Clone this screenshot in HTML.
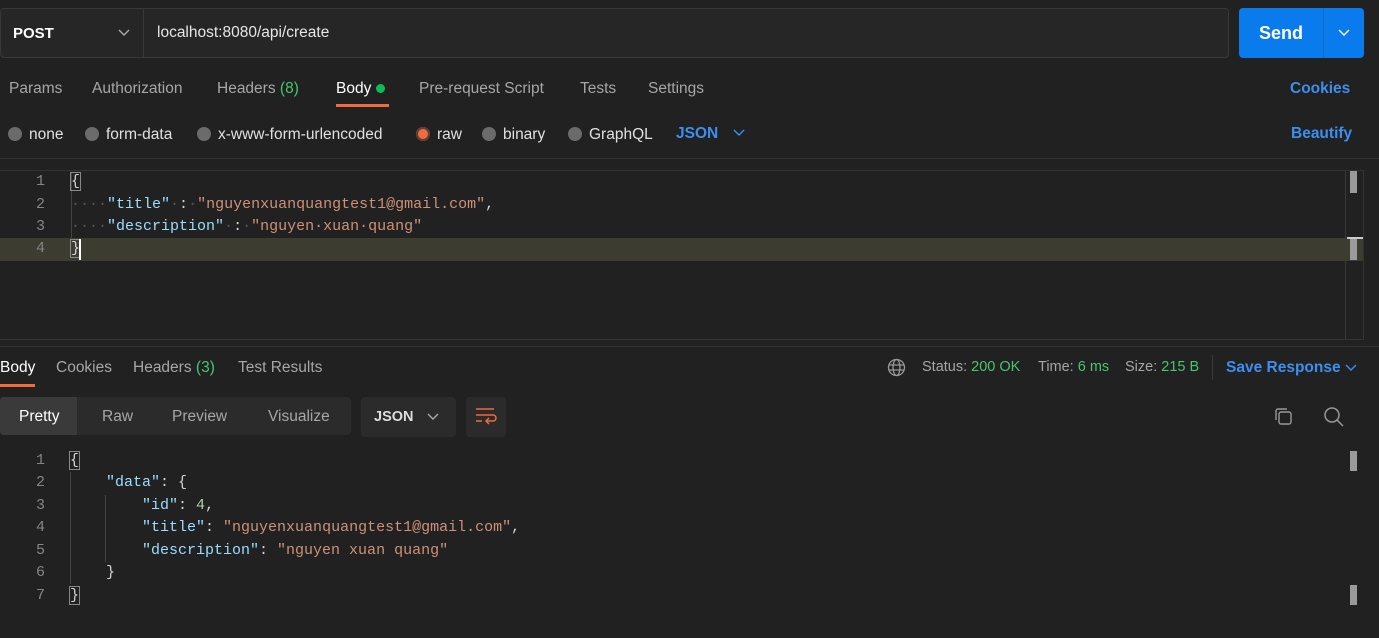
<!DOCTYPE html>
<html><head><style>
*{margin:0;padding:0;box-sizing:border-box}
body{width:1379px;height:638px;background:#212121;font-family:"Liberation Sans",sans-serif;color:#ccc;position:relative;overflow:hidden;font-size:15.5px}
.a{position:absolute;white-space:pre}
.mono{font-family:"Liberation Mono",monospace;font-size:15px}
.k{color:#9cdcfe}.s{color:#ce9178}.p{color:#d4d4d4}.n{color:#b5cea8}.d{color:#555}
.ln{color:#858585;width:45px;text-align:right}
.dot{display:inline-block;width:14px;height:14px;border-radius:50%;background:#6b6b6b;vertical-align:-2px;margin-right:7px}
.g{color:#49c46f}
.blue{color:#3d8fef;font-weight:bold}
</style></head><body>
<div class="a" style="left:0;top:8px;width:1229px;height:50px;border:1px solid #383838;border-radius:4px;background:#262626"></div>
<div class="a" style="left:143px;top:9px;width:1px;height:48px;background:#383838"></div>
<div class="a" style="left:13px;top:25px;font-weight:bold;color:#fff;font-size:15px">POST</div>
<svg class="a" style="left:118px;top:29px" width="12" height="8"><path d="M1 1l5 5 5-5" stroke="#aaa" fill="none" stroke-width="1.4"/></svg>
<div class="a" style="left:157px;top:24px;color:#e6e6e6">localhost:8080/api/create</div>
<div class="a" style="left:1239px;top:8px;width:125px;height:50px;background:#097bed;border-radius:4px"></div>
<div class="a" style="left:1323px;top:8px;width:1px;height:50px;background:#0a6ccf"></div>
<div class="a" style="left:1259px;top:23px;color:#fff;font-weight:bold;font-size:18px">Send</div>
<svg class="a" style="left:1338px;top:29px" width="12" height="8"><path d="M1 1l5 5 5-5" stroke="#fff" fill="none" stroke-width="1.4"/></svg>
<div class="a" style="left:9px;top:80px;color:#a6a6a6">Params</div>
<div class="a" style="left:92px;top:80px;color:#a6a6a6">Authorization</div>
<div class="a" style="left:217px;top:80px;color:#a6a6a6">Headers <span class="g">(8)</span></div>
<div class="a" style="left:336px;top:80px;color:#fff">Body <span style="display:inline-block;width:9px;height:9px;border-radius:50%;background:#0cbb52;margin-left:0px"></span></div>
<div class="a" style="left:336px;top:104px;width:53px;height:3px;background:#f26b3a"></div>
<div class="a" style="left:419px;top:80px;color:#a6a6a6">Pre-request Script</div>
<div class="a" style="left:580px;top:80px;color:#a6a6a6">Tests</div>
<div class="a" style="left:648px;top:80px;color:#a6a6a6">Settings</div>
<div class="a blue" style="left:1290px;top:80px">Cookies</div>
<div class="a" style="left:8px;top:126px;color:#e0e0e0"><span class="dot"></span>none</div>
<div class="a" style="left:85px;top:126px;color:#e0e0e0"><span class="dot"></span>form-data</div>
<div class="a" style="left:197px;top:126px;color:#e0e0e0"><span class="dot"></span>x-www-form-urlencoded</div>
<div class="a" style="left:416px;top:126px;color:#e0e0e0"><span class="dot" style="background:#f26b3a;box-shadow:0 0 0 2px #5a4038 inset"></span>raw</div>
<div class="a" style="left:482px;top:126px;color:#e0e0e0"><span class="dot"></span>binary</div>
<div class="a" style="left:568px;top:126px;color:#e0e0e0"><span class="dot"></span>GraphQL</div>
<div class="a blue" style="left:676px;top:125px">JSON</div>
<svg class="a" style="left:733px;top:129px" width="12" height="8"><path d="M1 1l5 5 5-5" stroke="#3d8fef" fill="none" stroke-width="1.4"/></svg>
<div class="a blue" style="left:1291px;top:125px">Beautify</div>
<div class="a" style="left:0;top:158px;width:1379px;height:1px;background:#333"></div>
<div class="a" style="left:0;top:170px;width:1364px;height:170px;border:1px solid #333;border-left:none"></div>
<div class="a" style="left:1345px;top:171px;width:1px;height:168px;background:#3a3a3a"></div>
<div class="a" style="left:0;top:238px;width:1363px;height:23px;background:#3c3c30"></div>
<div class="a" style="left:1350px;top:171px;width:7px;height:22px;background:#9a9a9a"></div>
<div class="a" style="left:1347px;top:237px;width:16px;height:2px;background:#ccc"></div>
<div class="a" style="left:1350px;top:239px;width:7px;height:21px;background:#9a9a9a"></div>
<div class="a mono ln" style="left:0;top:173px">1</div>
<div class="a mono ln" style="left:0;top:196px">2</div>
<div class="a mono ln" style="left:0;top:218px">3</div>
<div class="a mono ln" style="left:0;top:240px">4</div>
<div class="a" style="left:71px;top:172px;width:1px;height:66px;background:#444"></div>
<div class="a mono p" style="left:71px;top:173px;outline:1px solid #888">{</div>
<div class="a mono" style="left:71px;top:196px"><span class="d">····</span><span class="k">"title"</span><span class="d">·</span><span class="p">:</span><span class="d">·</span><span class="s">"nguyenxuanquangtest1@gmail.com"</span><span class="p">,</span></div>
<div class="a mono" style="left:71px;top:218px"><span class="d">····</span><span class="k">"description"</span><span class="d">·</span><span class="p">:</span><span class="d">·</span><span class="s">"nguyen·xuan·quang"</span></div>
<div class="a mono p" style="left:71px;top:240px;outline:1px solid #888">}</div>
<div class="a" style="left:79px;top:239px;width:2px;height:21px;background:#fff"></div>
<div class="a" style="left:0;top:346px;width:1379px;height:1px;background:#333"></div>
<div class="a" style="left:0;top:359px;color:#fff">Body</div>
<div class="a" style="left:0;top:384px;width:35px;height:3px;background:#f26b3a"></div>
<div class="a" style="left:56px;top:359px;color:#a6a6a6">Cookies</div>
<div class="a" style="left:133px;top:359px;color:#a6a6a6">Headers <span class="g">(3)</span></div>
<div class="a" style="left:238px;top:359px;color:#a6a6a6">Test Results</div>
<svg class="a" style="left:887px;top:358px" width="19" height="19" viewBox="0 0 19 19" fill="none" stroke="#999" stroke-width="1.3"><circle cx="9.5" cy="9.5" r="8"/><ellipse cx="9.5" cy="9.5" rx="3.5" ry="8"/><path d="M2 7h15M2 12h15"/></svg>
<div class="a" style="left:922px;top:359px;color:#a6a6a6;font-size:14.5px">Status: <span class="g">200 OK</span></div>
<div class="a" style="left:1038px;top:359px;color:#a6a6a6;font-size:14.5px">Time: <span class="g">6 ms</span></div>
<div class="a" style="left:1125px;top:359px;color:#a6a6a6;font-size:14.5px">Size: <span class="g">215 B</span></div>
<div class="a" style="left:1212px;top:355px;width:1px;height:25px;background:#3a3a3a"></div>
<div class="a blue" style="left:1226px;top:359px">Save Response</div>
<svg class="a" style="left:1345px;top:364px" width="12" height="8"><path d="M1 1l5 5 5-5" stroke="#3d8fef" fill="none" stroke-width="1.4"/></svg>
<div class="a" style="left:0;top:397px;width:351px;height:38px;background:#2b2b2b;border-radius:4px"></div>
<div class="a" style="left:0;top:397px;width:77px;height:38px;background:#3a3a3a;border-radius:4px 0 0 4px"></div>
<div class="a" style="left:19px;top:408px;color:#fff">Pretty</div>
<div class="a" style="left:102px;top:408px;color:#a6a6a6">Raw</div>
<div class="a" style="left:172px;top:408px;color:#a6a6a6">Preview</div>
<div class="a" style="left:268px;top:408px;color:#a6a6a6">Visualize</div>
<div class="a" style="left:361px;top:397px;width:95px;height:40px;background:#2b2b2b;border-radius:4px"></div>
<div class="a" style="left:374px;top:409px;color:#ddd;font-weight:bold;font-size:14.5px">JSON</div>
<svg class="a" style="left:427px;top:413px" width="12" height="8"><path d="M1 1l5 5 5-5" stroke="#aaa" fill="none" stroke-width="1.4"/></svg>
<div class="a" style="left:466px;top:397px;width:40px;height:40px;background:#2b2b2b;border-radius:4px"></div>
<svg class="a" style="left:475px;top:407px" width="22" height="20" fill="none" stroke="#f26b3a" stroke-width="1.5"><path d="M1 2h18M1 8h17a3 3 0 0 1 0 6h-7M14 11l-3 3 3 3M1 14h6"/></svg>
<svg class="a" style="left:1274px;top:407px" width="20" height="20" fill="none" stroke="#999" stroke-width="1.4"><rect x="5" y="5" width="12" height="12" rx="2"/><path d="M2 13V4a2 2 0 0 1 2-2h9"/></svg>
<svg class="a" style="left:1323px;top:406px" width="22" height="22" fill="none" stroke="#999" stroke-width="1.5"><circle cx="9" cy="9" r="7"/><path d="M14 14l6 6"/></svg>
<div class="a" style="left:1350px;top:451px;width:7px;height:20px;background:#9a9a9a"></div>
<div class="a" style="left:1350px;top:585px;width:7px;height:20px;background:#9a9a9a"></div>
<div class="a mono ln" style="left:0;top:452px">1</div>
<div class="a mono ln" style="left:0;top:474px">2</div>
<div class="a mono ln" style="left:0;top:497px">3</div>
<div class="a mono ln" style="left:0;top:519px">4</div>
<div class="a mono ln" style="left:0;top:542px">5</div>
<div class="a mono ln" style="left:0;top:564px">6</div>
<div class="a mono ln" style="left:0;top:587px">7</div>
<div class="a" style="left:70px;top:472px;width:1px;height:112px;background:#444"></div>
<div class="a" style="left:105px;top:495px;width:1px;height:67px;background:#444"></div>
<div class="a mono p" style="left:70px;top:452px;outline:1px solid #888">{</div>
<div class="a mono" style="left:70px;top:474px"><span class="k">    "data"</span><span class="p">: {</span></div>
<div class="a mono" style="left:70px;top:497px"><span class="k">        "id"</span><span class="p">: </span><span class="n">4</span><span class="p">,</span></div>
<div class="a mono" style="left:70px;top:519px"><span class="k">        "title"</span><span class="p">: </span><span class="s">"nguyenxuanquangtest1@gmail.com"</span><span class="p">,</span></div>
<div class="a mono" style="left:70px;top:542px"><span class="k">        "description"</span><span class="p">: </span><span class="s">"nguyen xuan quang"</span></div>
<div class="a mono p" style="left:70px;top:564px">    }</div>
<div class="a mono p" style="left:70px;top:587px;outline:1px solid #888">}</div>
</body></html>
